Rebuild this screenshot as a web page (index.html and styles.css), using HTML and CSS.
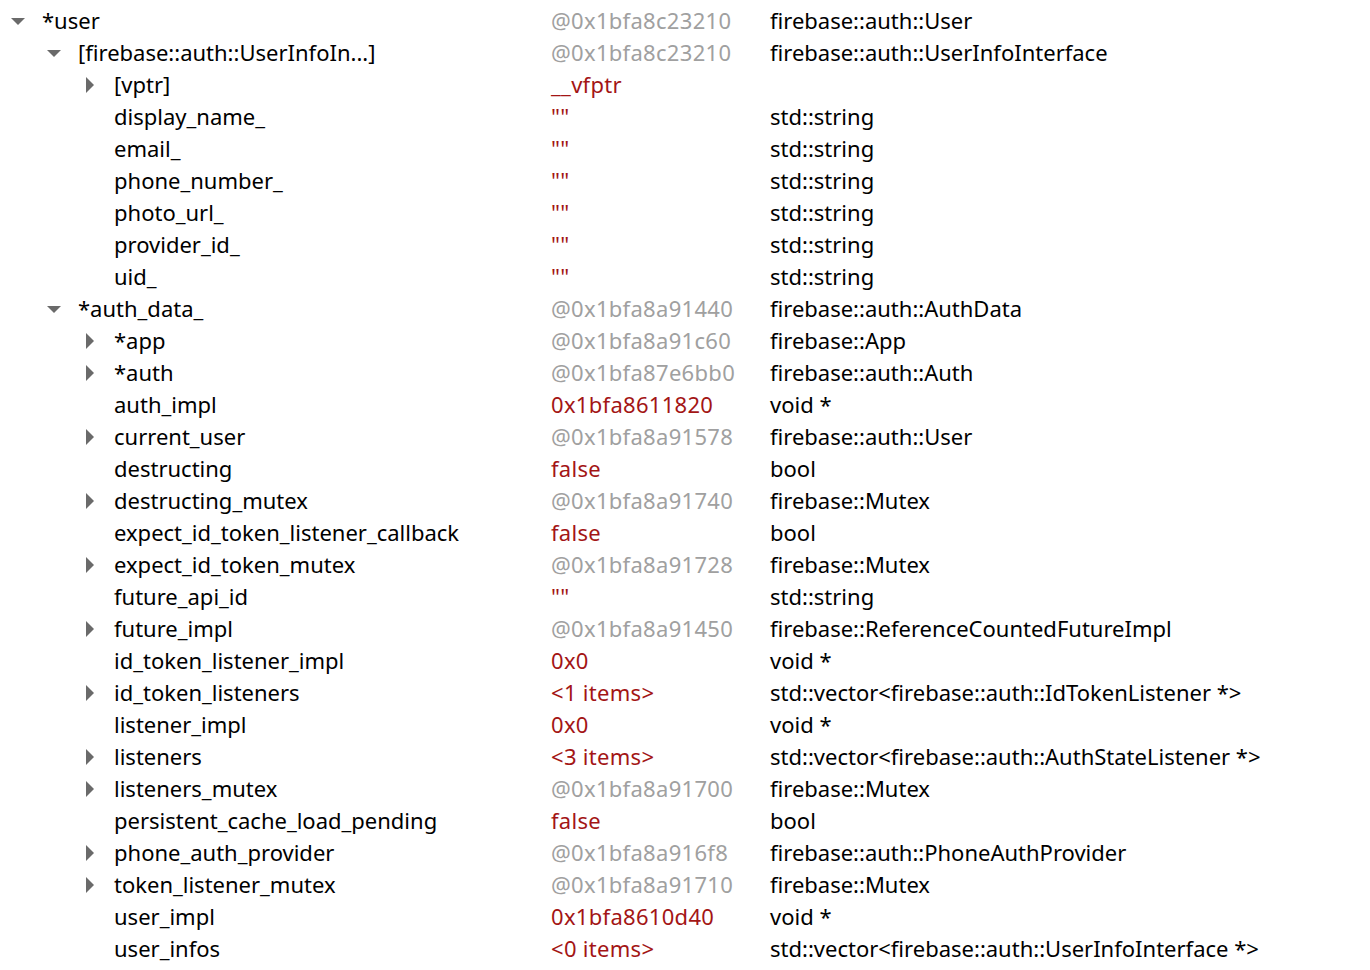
FILE: index.html
```html
<!DOCTYPE html>
<html lang="en">
<head>
    <meta charset="UTF-8">
    <title>Locals</title>
    <link rel="stylesheet" href="styles.css">
</head>
<body>
    <div class="tree">
        <div class="row l0"><div class="name"><span class="twisty open"></span>*user</div><div class="value addr">@0x1bfa8c23210</div><div class="type">firebase::auth::User</div></div>
        <div class="row l1"><div class="name"><span class="twisty open"></span>[firebase::auth::UserInfoIn...]</div><div class="value addr">@0x1bfa8c23210</div><div class="type">firebase::auth::UserInfoInterface</div></div>
        <div class="row l2"><div class="name"><span class="twisty closed"></span>[vptr]</div><div class="value">__vfptr</div><div class="type"></div></div>
        <div class="row l2"><div class="name"><span class="twisty"></span>display_name_</div><div class="value">""</div><div class="type">std::string</div></div>
        <div class="row l2"><div class="name"><span class="twisty"></span>email_</div><div class="value">""</div><div class="type">std::string</div></div>
        <div class="row l2"><div class="name"><span class="twisty"></span>phone_number_</div><div class="value">""</div><div class="type">std::string</div></div>
        <div class="row l2"><div class="name"><span class="twisty"></span>photo_url_</div><div class="value">""</div><div class="type">std::string</div></div>
        <div class="row l2"><div class="name"><span class="twisty"></span>provider_id_</div><div class="value">""</div><div class="type">std::string</div></div>
        <div class="row l2"><div class="name"><span class="twisty"></span>uid_</div><div class="value">""</div><div class="type">std::string</div></div>
        <div class="row l1"><div class="name"><span class="twisty open"></span>*auth_data_</div><div class="value addr">@0x1bfa8a91440</div><div class="type">firebase::auth::AuthData</div></div>
        <div class="row l2"><div class="name"><span class="twisty closed"></span>*app</div><div class="value addr">@0x1bfa8a91c60</div><div class="type">firebase::App</div></div>
        <div class="row l2"><div class="name"><span class="twisty closed"></span>*auth</div><div class="value addr">@0x1bfa87e6bb0</div><div class="type">firebase::auth::Auth</div></div>
        <div class="row l2"><div class="name"><span class="twisty"></span>auth_impl</div><div class="value">0x1bfa8611820</div><div class="type">void *</div></div>
        <div class="row l2"><div class="name"><span class="twisty closed"></span>current_user</div><div class="value addr">@0x1bfa8a91578</div><div class="type">firebase::auth::User</div></div>
        <div class="row l2"><div class="name"><span class="twisty"></span>destructing</div><div class="value">false</div><div class="type">bool</div></div>
        <div class="row l2"><div class="name"><span class="twisty closed"></span>destructing_mutex</div><div class="value addr">@0x1bfa8a91740</div><div class="type">firebase::Mutex</div></div>
        <div class="row l2"><div class="name"><span class="twisty"></span>expect_id_token_listener_callback</div><div class="value">false</div><div class="type">bool</div></div>
        <div class="row l2"><div class="name"><span class="twisty closed"></span>expect_id_token_mutex</div><div class="value addr">@0x1bfa8a91728</div><div class="type">firebase::Mutex</div></div>
        <div class="row l2"><div class="name"><span class="twisty"></span>future_api_id</div><div class="value">""</div><div class="type">std::string</div></div>
        <div class="row l2"><div class="name"><span class="twisty closed"></span>future_impl</div><div class="value addr">@0x1bfa8a91450</div><div class="type">firebase::ReferenceCountedFutureImpl</div></div>
        <div class="row l2"><div class="name"><span class="twisty"></span>id_token_listener_impl</div><div class="value">0x0</div><div class="type">void *</div></div>
        <div class="row l2"><div class="name"><span class="twisty closed"></span>id_token_listeners</div><div class="value">&lt;1 items&gt;</div><div class="type">std::vector&lt;firebase::auth::IdTokenListener *&gt;</div></div>
        <div class="row l2"><div class="name"><span class="twisty"></span>listener_impl</div><div class="value">0x0</div><div class="type">void *</div></div>
        <div class="row l2"><div class="name"><span class="twisty closed"></span>listeners</div><div class="value">&lt;3 items&gt;</div><div class="type">std::vector&lt;firebase::auth::AuthStateListener *&gt;</div></div>
        <div class="row l2"><div class="name"><span class="twisty closed"></span>listeners_mutex</div><div class="value addr">@0x1bfa8a91700</div><div class="type">firebase::Mutex</div></div>
        <div class="row l2"><div class="name"><span class="twisty"></span>persistent_cache_load_pending</div><div class="value">false</div><div class="type">bool</div></div>
        <div class="row l2"><div class="name"><span class="twisty closed"></span>phone_auth_provider</div><div class="value addr">@0x1bfa8a916f8</div><div class="type">firebase::auth::PhoneAuthProvider</div></div>
        <div class="row l2"><div class="name"><span class="twisty closed"></span>token_listener_mutex</div><div class="value addr">@0x1bfa8a91710</div><div class="type">firebase::Mutex</div></div>
        <div class="row l2"><div class="name"><span class="twisty"></span>user_impl</div><div class="value">0x1bfa8610d40</div><div class="type">void *</div></div>
        <div class="row l2"><div class="name"><span class="twisty"></span>user_infos</div><div class="value">&lt;0 items&gt;</div><div class="type">std::vector&lt;firebase::auth::UserInfoInterface *&gt;</div></div>
    </div>
</body>
</html>
```

FILE: styles.css
```css
body {
    margin: 0;
    background: #ffffff;
    font-family: "Noto Sans", "Open Sans", sans-serif;
    font-size: 22px;
    color: #000000;
}

.tree {
    padding-top: 4px;
}

.row {
    display: grid;
    grid-template-columns: 551px 219px 1fr;
    height: 32px;
    line-height: 32px;
    white-space: nowrap;
}

.name {
    display: flex;
    align-items: center;
}

.l0 .name { padding-left: 4px; }
.l1 .name { padding-left: 40px; }
.l2 .name { padding-left: 76px; }

/* expand / collapse arrows */
.twisty {
    width: 28px;
    height: 32px;
    margin-right: 10px;
    flex: none;
    position: relative;
}

.twisty.open::before {
    content: "";
    position: absolute;
    left: 7px;
    top: 14px;
    border-left: 7px solid transparent;
    border-right: 7px solid transparent;
    border-top: 7px solid #6a6a6a;
}

.twisty.closed::before {
    content: "";
    position: absolute;
    left: 10px;
    top: 9px;
    border-top: 8px solid transparent;
    border-bottom: 8px solid transparent;
    border-left: 8px solid #6a6a6a;
}

.value {
    color: #a31515;
    letter-spacing: 0.3px;
}

.value.addr {
    color: #a0a0a0;
}
```
